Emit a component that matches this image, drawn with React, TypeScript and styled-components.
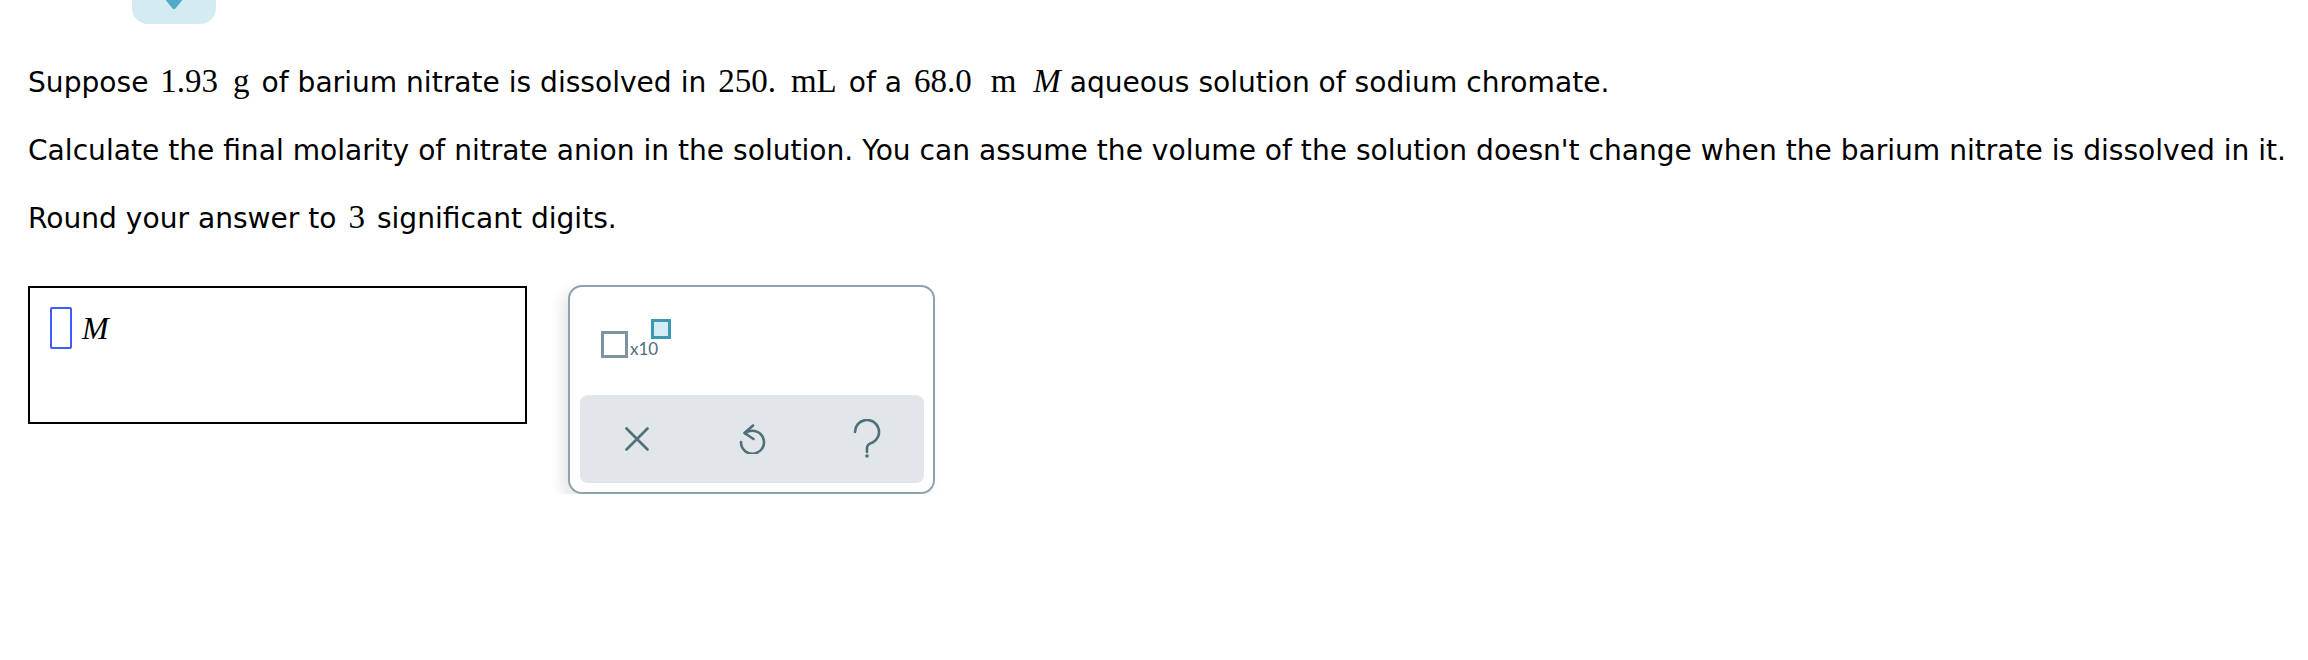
import React from "react";
import styled, { createGlobalStyle } from "styled-components";

const GlobalStyle = createGlobalStyle`
  body {
    margin: 0;
    background: #ffffff;
    font-family: "DejaVu Sans", Verdana, sans-serif;
    color: #000000;
  }
`;

const Page = styled.div`
  padding-left: 28px;
`;

const TopTab = styled.div`
  margin-left: 104px;
  width: 84px;
  height: 24px;
  background: #d2ecf1;
  border-radius: 0 0 16px 16px;
  display: flex;
  justify-content: center;
  align-items: flex-start;
`;

const Question = styled.div`
  margin-top: 39px;
`;

const Para = styled.p<{ $last?: boolean }>`
  margin: 0 0 ${(p) => (p.$last ? 0 : 28)}px;
  font-size: 28.1px;
  line-height: 40px;
  white-space: nowrap;
`;

const Math = styled.span<{ $tight?: boolean }>`
  display: inline-block;
  margin: 0 ${(p) => (p.$tight ? 0 : 3)}px 0 3px;
  font-family: "Liberation Serif", "Times New Roman", serif;
  font-size: 33px;
  line-height: 1;
`;

const MathUnit = styled.span<{ $italic?: boolean; $gap?: number }>`
  margin-left: ${(p) => p.$gap ?? 15}px;
  font-style: ${(p) => (p.$italic ? "italic" : "normal")};
`;

const AnswerRow = styled.div`
  display: flex;
  align-items: flex-start;
  gap: 41px;
  margin-top: 47px;
`;

const AnswerBox = styled.div`
  box-sizing: border-box;
  width: 499px;
  height: 138px;
  border: 2px solid #000000;
  padding: 19px 0 0 20px;
  display: flex;
  align-items: flex-start;
`;

const Cursor = styled.span`
  box-sizing: border-box;
  width: 22px;
  height: 42px;
  border: 2px solid #3d5cff;
  border-radius: 2px;
`;

const UnitLabel = styled.span`
  margin: 5px 0 0 10px;
  font-family: "Liberation Serif", "Times New Roman", serif;
  font-style: italic;
  font-size: 32px;
  line-height: 1;
`;

const Keypad = styled.div`
  box-sizing: border-box;
  width: 367px;
  height: 209px;
  margin-top: -1px;
  border: 2px solid #8ea2ab;
  border-radius: 14px;
  background: #ffffff;
  box-shadow: -6px 6px 14px rgba(0, 0, 0, 0.1);
  padding: 0 9px 9px 10px;
  display: flex;
  flex-direction: column;
`;

const KeyArea = styled.div`
  flex: 1;
  padding: 32px 0 0 21px;
`;

const SciWrap = styled.div`
  display: flex;
  align-items: flex-start;
`;

const BaseBox = styled.span`
  box-sizing: border-box;
  width: 27px;
  height: 27px;
  margin-top: 12px;
  border: 3px solid #7d949f;
`;

const TimesTen = styled.span`
  margin: 21px 0 0 2px;
  font-family: Lato, "Open Sans", sans-serif;
  font-size: 17px;
  line-height: 1;
  color: #4f6f7b;
`;

const SupBox = styled.span`
  box-sizing: border-box;
  width: 20px;
  height: 20px;
  margin-left: -7px;
  border: 3px solid #3a9ab4;
  background: #d3edf2;
`;

const ToolBar = styled.div`
  height: 88px;
  background: #e1e6e9;
  border-radius: 8px;
  display: grid;
  grid-template-columns: repeat(3, 1fr);
  align-items: center;
  justify-items: center;
`;

const ToolButton = styled.button`
  border: none;
  background: transparent;
  padding: 0;
  display: flex;
  cursor: pointer;
`;

const ICON = "#4f6f7b";

const App = () => {
  return (
    <Page>
      <GlobalStyle />
      <TopTab>
        <svg width="20" height="10" viewBox="0 0 20 10">
          <path d="M0 -2 L20 -2 L11.5 8.5 Q10 10 8.5 8.5 Z" fill="#4fabc7" />
        </svg>
      </TopTab>

      <Question>
        <Para>
          Suppose{" "}
          <Math>
            1.93<MathUnit>g</MathUnit>
          </Math>{" "}
          of barium nitrate is dissolved in{" "}
          <Math>
            250.<MathUnit>mL</MathUnit>
          </Math>{" "}
          of a{" "}
          <Math $tight>
            68.0<MathUnit $gap={19}>m</MathUnit>
            <MathUnit $italic $gap={17}>
              M
            </MathUnit>
          </Math>{" "}
          aqueous solution of sodium chromate.
        </Para>
        <Para>
          Calculate the final molarity of nitrate anion in the solution. You
          can assume the volume of the solution doesn't change when the barium
          nitrate is dissolved in it.
        </Para>
        <Para $last>
          Round your answer to <Math>3</Math> significant digits.
        </Para>
      </Question>

      <AnswerRow>
        <AnswerBox>
          <Cursor />
          <UnitLabel>M</UnitLabel>
        </AnswerBox>

        <Keypad>
          <KeyArea>
            <SciWrap>
              <BaseBox />
              <TimesTen>x10</TimesTen>
              <SupBox />
            </SciWrap>
          </KeyArea>
          <ToolBar>
            <ToolButton aria-label="clear">
              <svg width="24" height="24" viewBox="0 0 24 24">
                <path
                  d="M1.5 1.5 L22.5 22.5 M22.5 1.5 L1.5 22.5"
                  stroke={ICON}
                  strokeWidth="2.6"
                  strokeLinecap="round"
                  fill="none"
                />
              </svg>
            </ToolButton>
            <ToolButton aria-label="undo">
              <svg width="28" height="30" viewBox="0 0 28 30">
                <path
                  d="M3 18 A11.5 11.5 0 1 0 7 9.5"
                  stroke={ICON}
                  strokeWidth="2.6"
                  strokeLinecap="round"
                  fill="none"
                />
                <path
                  d="M15 1.5 L6.5 9 L15.5 15"
                  stroke={ICON}
                  strokeWidth="2.6"
                  strokeLinecap="round"
                  strokeLinejoin="round"
                  fill="none"
                />
              </svg>
            </ToolButton>
            <ToolButton aria-label="help">
              <svg width="28" height="40" viewBox="0 0 28 40">
                <path
                  d="M2 13 A12 12 0 1 1 19.5 23.6 Q14 25.5 14 29 V33"
                  stroke={ICON}
                  strokeWidth="2.6"
                  strokeLinecap="round"
                  fill="none"
                />
                <circle cx="14" cy="37" r="1.8" fill={ICON} />
              </svg>
            </ToolButton>
          </ToolBar>
        </Keypad>
      </AnswerRow>
    </Page>
  );
};

export default App;
